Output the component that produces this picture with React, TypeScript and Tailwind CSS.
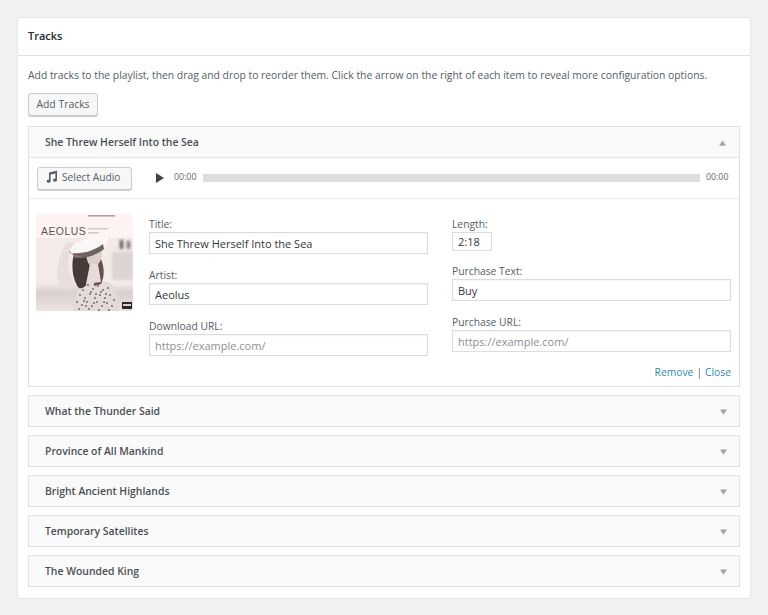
import React from "react";

const font = { fontFamily: '"Open Sans", "Noto Sans", sans-serif' };

function Album() {
  const dots = [
    [42, 72], [47, 76], [52, 71], [57, 75], [62, 72], [67, 76], [72, 74], [44, 81], [49, 84], [54, 80], [59, 84], [64, 81], [69, 84], [74, 81],
    [41, 88], [46, 91], [51, 88], [56, 92], [61, 88], [66, 92], [71, 89], [76, 92], [43, 95], [53, 95], [63, 96], [73, 96], [78, 86],
    [45, 70], [55, 78], [65, 78], [50, 92], [60, 80], [70, 80], [48, 87], [58, 89], [68, 88],
  ];
  return (
    <svg viewBox="0 0 97 97" className="w-[97px] h-[97px] rounded-[3px] shrink-0 block">
      <defs>
        <filter id="b1"><feGaussianBlur stdDeviation="0.7" /></filter>
        <filter id="b2"><feGaussianBlur stdDeviation="1.6" /></filter>
        <linearGradient id="bg" x1="0" y1="0" x2="0" y2="1">
          <stop offset="0" stopColor="#f3eae8" />
          <stop offset="0.62" stopColor="#f4ebe9" />
          <stop offset="0.74" stopColor="#dad1cf" />
          <stop offset="1" stopColor="#ebe3e1" />
        </linearGradient>
      </defs>
      <rect width="97" height="97" fill="#fdf4f2" />
      <rect y="24" width="97" height="73" fill="url(#bg)" />
      <g filter="url(#b2)">
        <rect x="84" y="26" width="3" height="9" fill="#4e4543" />
        <rect x="91" y="27" width="3" height="8" fill="#6e6462" />
        <rect x="76" y="38" width="21" height="28" fill="#dcd4d2" />
      </g>
      <g filter="url(#b1)">
        <path d="M38 97 C38 82 42 72 50 68 L72 68 C79 72 82 84 83 97 Z" fill="#e4dad7" />
        <path d="M38 40 C35 50 36 66 43 74 C51 76 54 64 54 52 L52 38 Z" fill="#463b38" />
        <path d="M62 40 C69 50 69 62 65 70 L58 72 L58 46 Z" fill="#5e514d" />
        <path d="M50 38 L66 38 C66 46 62 53 57 53 C53 53 50 46 50 38 Z" fill="#ddcfcb" />
        <path d="M54 50 L62 50 L65 68 L50 70 Z" fill="#e8dcd9" />
        <path d="M23 72 C19 56 23 42 29 31 C33 26 39 29 37 34 C32 42 31 52 35 62 L40 72 L30 75 Z" fill="#e9dedb" />
        <path d="M33 37 C37 28 52 22 71 23 C74 25 71 31 67 35 C60 41 46 43 35 42 Z" fill="#fbf7f6" />
        <path d="M37 39 C46 40 58 37 67 30 L68 35 C60 42 46 45 38 44 Z" fill="#6f625e" />
        <path d="M33 37 C36 41 40 43 46 43" fill="none" stroke="#8e817d" strokeWidth="1" />
      </g>
      <g fill="#3e3533" opacity="0.6">
        {dots.map(([x, y]) => (
          <circle key={`${x}-${y}`} cx={x} cy={y} r="1.1" />
        ))}
      </g>
      <rect x="52" y="1" width="27" height="1.6" fill="#8a8280" opacity="0.7" />
      <text x="5" y="21" fontSize="10.4" fill="#5a5453" style={{ fontFamily: '"Liberation Sans", sans-serif', letterSpacing: "0.5px" }}>AEOLUS</text>
      <rect x="52" y="14" width="20" height="1.4" fill="#cfc7c5" />
      <rect x="52" y="18" width="11" height="1.4" fill="#cfc7c5" />
      <rect x="86" y="88" width="10" height="7" fill="#2c2827" />
      <rect x="87" y="90" width="8" height="2" fill="#d8d0ce" />
    </svg>
  );
}

function Field({ label, value, placeholder, short }: { label: string; value?: string; placeholder?: string; short?: boolean }) {
  return (
    <label className={short ? "block mb-[12px]" : "block mb-[13px]"}>
      <span className="block h-4 text-[10.3px] leading-4 text-[#555d66]">{label}</span>
      <input
        readOnly
        defaultValue={value}
        placeholder={placeholder}
        className={
          short
            ? "block w-[40px] h-[19px] px-[5px] border border-[#dddddd] bg-white text-[11px] text-[#32373c] outline-none"
            : "block w-full h-[22px] px-[5px] border border-[#dddddd] bg-white text-[11px] text-[#32373c] placeholder:text-[#8a8f94] outline-none shadow-[inset_0_1px_2px_rgba(0,0,0,0.05)]"
        }
        style={font}
      />
    </label>
  );
}

function Arrow({ up }: { up?: boolean }) {
  return (
    <svg viewBox="0 0 8 6" className="w-[7px] h-[6px] fill-[#a0a5aa]">
      <path d={up ? "M4 0 L8 6 L0 6 Z" : "M0 0 L8 0 L4 6 Z"} />
    </svg>
  );
}

function TrackHead({ title, up }: { title: string; up?: boolean }) {
  return (
    <div className={`h-[30px] pt-[1px] flex items-center justify-between pl-4 bg-[#fafafa] ${up ? "pr-[13px]" : "pr-[12px]"}`}>
      <span className="text-[10.4px] font-semibold text-[#4a4f54]">{title}</span>
      <Arrow up={up} />
    </div>
  );
}

const others = ["What the Thunder Said", "Province of All Mankind", "Bright Ancient Highlands", "Temporary Satellites", "The Wounded King"];

export default function App() {
  return (
    <div className="min-h-[615px] bg-[#f1f1f1] pt-[17px] pl-[17px] pr-[17px]" style={font}>
      <div className="bg-white border border-[#e5e5e5] pb-[11px]">
        <div className="h-[38px] flex items-center px-[10px] border-b border-[#e1e1e1]">
          <h2 className="text-[11px] font-semibold text-[#23282d] -mt-[1px]">Tracks</h2>
        </div>
        <div className="px-[10px]">
          <p className="mt-[10px] text-[10.37px] leading-[18px] text-[#555d66] whitespace-nowrap">
            Add tracks to the playlist, then drag and drop to reorder them. Click the arrow on the right of each item to reveal more configuration options.
          </p>
          <button className="mt-[9px] block w-[70px] h-[23px] text-[10.4px] text-[#555d66] bg-[#f7f7f7] border border-[#cccccc] rounded-[3px] shadow-[0_1px_0_#cccccc]">
            Add Tracks
          </button>

          <div className="mt-[10px] border border-[#e1e1e1] bg-white">
            <div className="border-b border-[#e5e5e5]">
              <TrackHead title="She Threw Herself Into the Sea" up />
            </div>
            <div className="h-[41px] flex items-center pl-2 pr-[11px] border-b border-[#eeeeee]">
              <button className="w-[95px] h-[23px] pl-[6px] flex items-center justify-start gap-[4px] text-[10.2px] text-[#555d66] bg-[#f7f7f7] border border-[#cccccc] rounded-[3px] shadow-[0_1px_0_#cccccc]">
                <svg viewBox="0 0 14 14" className="w-[14px] h-[14px] fill-[#555d66] -mt-[2px]">
                  <path d="M5 2.6 L13 0.8 V10 A2 1.6 0 1 1 11.4 8.5 V3.4 L6.6 4.5 V11.2 A2 1.6 0 1 1 5 9.7 Z" />
                </svg>
                Select Audio
              </button>
              <svg viewBox="0 0 8 10" className="ml-[24px] w-[8px] h-[10px] fill-[#444444] shrink-0">
                <path d="M0 0 L8 5 L0 10 Z" />
              </svg>
              <span className="ml-[10px] w-[23px] text-[8.8px] text-[#666666]">00:00</span>
              <div className="ml-[6px] h-2 flex-1 bg-[#dddddd]" />
              <span className="ml-[6px] w-[22px] text-[8.8px] text-[#666666]">00:00</span>
            </div>
            <div className="pl-[7px] pr-2 pt-[15px] pb-[4px]">
              <div className="flex">
                <Album />
                <div className="ml-4 flex-1 flex gap-6 mt-[2px]">
                  <div className="w-[279px]">
                    <Field label="Title:" value="She Threw Herself Into the Sea" />
                    <Field label="Artist:" value="Aeolus" />
                    <Field label="Download URL:" placeholder="https://example.com/" />
                  </div>
                  <div className="w-[279px]">
                    <Field label="Length:" value="2:18" short />
                    <Field label="Purchase Text:" value="Buy" />
                    <Field label="Purchase URL:" placeholder="https://example.com/" />
                  </div>
                </div>
              </div>
              <div className="-mt-[5px] h-[18px] flex items-center justify-end gap-[3px] text-[10.3px] text-[#555d66]">
                <a className="text-[#2e8ab8]">Remove</a>
                <span>|</span>
                <a className="text-[#2e8ab8]">Close</a>
              </div>
            </div>
          </div>

          {others.map((t) => (
            <div key={t} className="mt-2 border border-[#e1e1e1]">
              <TrackHead title={t} />
            </div>
          ))}
        </div>
      </div>
    </div>
  );
}
